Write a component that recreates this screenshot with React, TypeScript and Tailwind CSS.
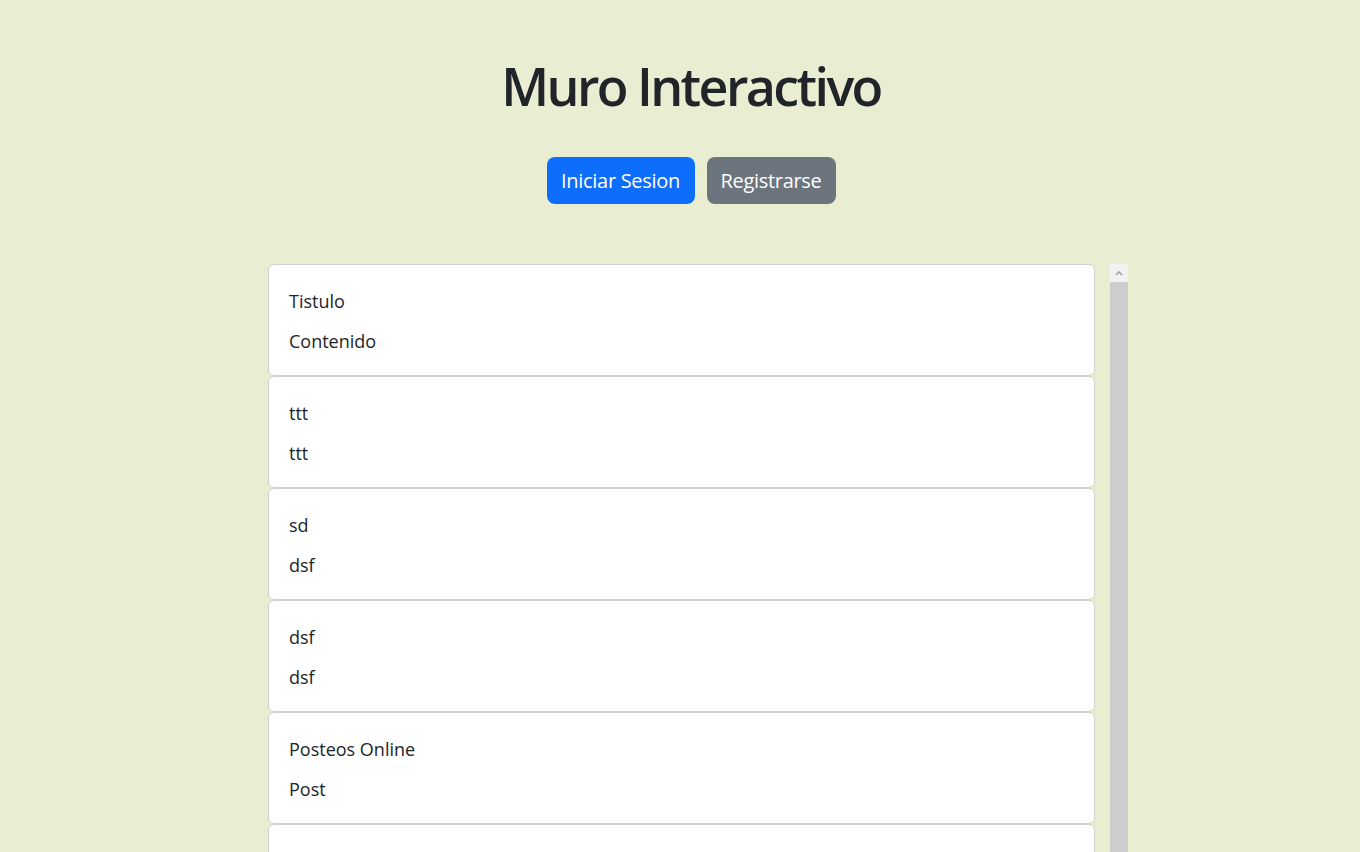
import React from "react";

const posts = [
  { t: "Tistulo", c: "Contenido" },
  { t: "ttt", c: "ttt" },
  { t: "sd", c: "dsf" },
  { t: "dsf", c: "dsf" },
  { t: "Posteos Online", c: "Post" },
  { t: "", c: "" },
];

export default function App() {
  return (
    <div
      className="h-screen overflow-hidden bg-[#e9eed3] text-[#212529]"
      style={{ fontFamily: '"Open Sans", "Noto Sans", sans-serif' }}
    >
      <div className="flex flex-col items-center pl-[22px] pt-[55px]">
        <h1 className="text-[52px] font-semibold leading-[62px] tracking-[-2.6px]">
          Muro Interactivo
        </h1>
        <div className="mt-[40px] flex gap-3">
          <button className="h-[47px] w-[148px] rounded-lg bg-[#0d6efd] text-[20px] tracking-[-0.3px] text-white">
            Iniciar Sesion
          </button>
          <button className="h-[47px] w-[129px] rounded-lg bg-[#6c757d] text-[20px] tracking-[-0.3px] text-white">
            Registrarse
          </button>
        </div>
      </div>
      <div className="mt-[60px] flex justify-center pl-[36px]">
        <div className="flex gap-[15px]">
          <div className="flex w-[827px] flex-col">
            {posts.map((p, i) => (
              <div
                key={i}
                className="flex h-[112px] flex-col gap-[13px] rounded-md border border-[#d0d0d0] bg-white px-5 pt-[23px] text-[18px] leading-[27px]"
              >
                {p.t && <p>{p.t}</p>}
                {p.c && <p>{p.c}</p>}
              </div>
            ))}
          </div>
          <div className="flex w-[18px] flex-col">
            <div className="flex h-[18px] items-center justify-center bg-[#f1f1f1]">
              <svg width="8" height="6" viewBox="0 0 8 6">
                <path d="M1 5 L4 2 L7 5" fill="none" stroke="#a3a3a3" strokeWidth="1.6" />
              </svg>
            </div>
            <div className="flex-1 bg-[#cdcdcd]" />
          </div>
        </div>
      </div>
    </div>
  );
}
